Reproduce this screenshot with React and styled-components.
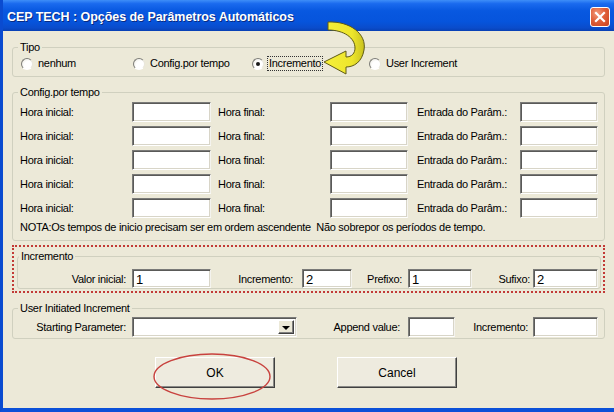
import React from 'react';
import styled, { createGlobalStyle } from 'styled-components';

const Global = createGlobalStyle`
  html, body { margin: 0; padding: 0; background: #ffffff; }
  body { font-family: "Liberation Sans", Arial, sans-serif; }
  * { box-sizing: border-box; }
`;

const Window = styled.div`
  position: relative;
  width: 614px;
  height: 412px;
  display: flex;
  flex-direction: column;
  background: #ECE9D8;
  border-left: 3px solid #0A4BD0;
  border-bottom: 4px solid #0B50D8;
  overflow: hidden;
`;

const TitleBar = styled.div`
  height: 31px;
  flex: none;
  display: flex;
  align-items: center;
  justify-content: space-between;
  padding: 3px 4px 0 4px;
  margin-left: -3px;
  padding-left: 7px;
  background: linear-gradient(to bottom, #3E8EF8 0%, #1A6AEE 12%, #0858E0 35%, #0654DC 70%, #0A4CCB 90%, #0840B4 100%);
`;

const Title = styled.div`
  color: #ffffff;
  font-weight: bold;
  font-size: 12.5px;
  letter-spacing: -0.05px;
  text-shadow: 1px 1px 0 #0A2A80;
  white-space: nowrap;
`;

const CloseButton = styled.div`
  width: 20px;
  height: 20px;
  border-radius: 3px;
  border: 1px solid #ffffff;
  background: radial-gradient(circle at 35% 30%, #F29A7C 0%, #E0603A 45%, #C8411E 100%);
  display: flex;
  align-items: center;
  justify-content: center;
`;

const Body = styled.div`
  flex: 1;
  display: flex;
  flex-direction: column;
  padding: 11px 9px 0 9px;
  font-size: 11px;
  letter-spacing: -0.3px;
  color: #000;
`;

const Group = styled.fieldset`
  margin: ${p => p.$mt || 0}px 0 0 0;
  padding: ${p => p.$pad};
  border: 1px solid #D0D0BF;
  border-radius: 3px;
  min-width: 0;
`;

const Legend = styled.legend`
  padding: 0 2px;
  margin-left: ${p => p.$ml || 0}px;
  font-size: 11px;
  line-height: 11px;
  letter-spacing: -0.3px;
`;

const RadioRow = styled.div`
  display: grid;
  grid-template-columns: 112px 119px 117px auto;
  height: 14px;
  align-items: center;
`;

const RadioItem = styled.label`
  display: flex;
  align-items: center;
  gap: 3px;
  white-space: nowrap;
`;

const RadioDot = styled.span`
  width: 12px;
  height: 12px;
  flex: none;
  border-radius: 50%;
  background: radial-gradient(circle at 65% 65%, #ffffff 0%, #ffffff 45%, #e8e6dc 100%);
  border: 1px solid;
  border-color: #7d7d78 #e8e6dc #ffffff #7d7d78;
  display: flex;
  align-items: center;
  justify-content: center;
  &::after {
    content: "";
    width: 4px;
    height: 4px;
    border-radius: 50%;
    background: ${p => (p.$checked ? '#1a1a1a' : 'transparent')};
  }
`;

const RadioText = styled.span`
  padding: 1px 1px;
  border: 1px dotted ${p => (p.$focus ? '#333' : 'transparent')};
  line-height: 11px;
`;

const TimeGrid = styled.div`
  display: grid;
  grid-template-columns: 112px 79px 119px 78px 112px 78px;
  grid-auto-rows: 20px;
  row-gap: 4px;
  align-items: center;
`;

const Label = styled.span`
  padding-left: ${p => p.$indent || 0}px;
  white-space: nowrap;
`;

const RightLabel = styled.span`
  width: ${p => p.$w}px;
  flex: none;
  text-align: right;
  padding-right: ${p => p.$pr || 0}px;
  white-space: nowrap;
`;

const Field = styled.input`
  width: ${p => (p.$w ? `${p.$w}px` : '100%')};
  height: ${p => p.$h || 20}px;
  flex: none;
  margin: 0;
  padding: 1px 3px 0 3px;
  background: #ffffff;
  border: 1px solid;
  border-color: #7a7a78 #f4f3ee #ffffff #7a7a78;
  box-shadow: inset 1px 1px 0 #5a5a58, inset -1px -1px 0 #d8d5c8;
  font-family: "Liberation Sans", Arial, sans-serif;
  font-size: 13px;
  color: #000;
  outline: none;
`;

const Note = styled.div`
  margin-top: 3px;
  line-height: 13px;
  white-space: nowrap;
`;

const Highlight = styled.div`
  margin-top: 4px;
  border: 2px dotted #C23A36;
  padding: 4px 2px 2px 3px;
`;

const FieldRow = styled.div`
  display: flex;
  align-items: center;
  height: ${p => p.$h || 20}px;
`;

const Combo = styled.div`
  width: ${p => p.$w}px;
  height: 20px;
  flex: none;
  background: #ffffff;
  border: 1px solid;
  border-color: #7a7a78 #f4f3ee #ffffff #7a7a78;
  box-shadow: inset 1px 1px 0 #5a5a58, inset -1px -1px 0 #d8d5c8;
  display: flex;
  justify-content: flex-end;
  padding: 2px;
`;

const ComboButton = styled.div`
  width: 16px;
  height: 100%;
  background: #ECE9D8;
  border: 1px solid;
  border-color: #ffffff #404040 #404040 #ffffff;
  box-shadow: inset -1px -1px 0 #808080;
  display: flex;
  align-items: center;
  justify-content: center;
  &::after {
    content: "";
    border-left: 4px solid transparent;
    border-right: 4px solid transparent;
    border-top: 4px solid #000;
    margin-top: 1px;
  }
`;

const ButtonRow = styled.div`
  margin-top: 18px;
  display: flex;
  gap: 62px;
  padding-left: 143px;
`;

const ButtonWrap = styled.div`
  position: relative;
`;

const Button = styled.button`
  width: 120px;
  height: 31px;
  margin: 0;
  padding: 0;
  background: #EEEBDF;
  border: 1px solid;
  border-color: #ffffff #404040 #404040 #ffffff;
  box-shadow: inset -1px -1px 0 #8a8a86;
  font-family: "Liberation Sans", Arial, sans-serif;
  font-size: 12px;
  color: #000;
`;

const Ellipse = styled.svg`
  position: absolute;
  left: -2px;
  top: -4px;
  pointer-events: none;
  overflow: visible;
`;

const Arrow = styled.svg`
  position: absolute;
  left: 315px;
  top: 18px;
  pointer-events: none;
`;

export default function App() {
  const rows = [0, 1, 2, 3, 4];
  return (
    <>
      <Global />
      <Window>
        <TitleBar>
          <Title>CEP TECH : Opções de Parâmetros Automáticos</Title>
          <CloseButton>
            <svg width="12" height="12" viewBox="0 0 12 12">
              <path d="M2 2 L10 10 M10 2 L2 10" stroke="#ffffff" strokeWidth="2.2" strokeLinecap="square" />
            </svg>
          </CloseButton>
        </TitleBar>
        <Body>
          <Group $pad="3px 8px 6px 8px">
            <Legend $ml={-3}>Tipo</Legend>
            <RadioRow>
              <RadioItem><RadioDot /><RadioText>nenhum</RadioText></RadioItem>
              <RadioItem><RadioDot /><RadioText>Config.por tempo</RadioText></RadioItem>
              <RadioItem><RadioDot $checked /><RadioText $focus>Incremento</RadioText></RadioItem>
              <RadioItem><RadioDot /><RadioText>User Increment</RadioText></RadioItem>
            </RadioRow>
          </Group>

          <Group $mt={10} $pad="4px 5px 6px 7px">
            <Legend $ml={-2}>Config.por tempo</Legend>
            <TimeGrid>
              {rows.map(i => (
                <React.Fragment key={i}>
                  <Label>Hora inicial:</Label>
                  <Field readOnly />
                  <Label $indent={7}>Hora final:</Label>
                  <Field readOnly />
                  <Label $indent={9}>Entrada do Parâm.:</Label>
                  <Field readOnly />
                </React.Fragment>
              ))}
            </TimeGrid>
            <Note>NOTA:Os tempos de inicio precisam ser em ordem ascendente&nbsp; Não sobrepor os períodos de tempo.</Note>
          </Group>

          <Highlight>
            <Group $pad="7px 0 0 0">
              <Legend $ml={1}>Incremento</Legend>
              <FieldRow $h={19}>
                <RightLabel $w={114} $pr={6}>Valor inicial:</RightLabel>
                <Field readOnly $w={79} $h={19} value="1" />
                <RightLabel $w={91} $pr={9}>Incremento:</RightLabel>
                <Field readOnly $w={50} $h={19} value="2" />
                <RightLabel $w={56} $pr={6}>Prefixo:</RightLabel>
                <Field readOnly $w={64} $h={19} value="1" />
                <RightLabel $w={61} $pr={3}>Sufixo:</RightLabel>
                <Field readOnly $w={65} $h={19} value="2" />
              </FieldRow>
            </Group>
          </Highlight>

          <Group $mt={10} $pad="3px 0 1px 0">
            <Legend $ml={5}>User Initiated Increment</Legend>
            <FieldRow>
              <RightLabel $w={119} $pr={6}>Starting Parameter:</RightLabel>
              <Combo $w={165}><ComboButton /></Combo>
              <RightLabel $w={111} $pr={8}>Append value:</RightLabel>
              <Field readOnly $w={47} />
              <RightLabel $w={78} $pr={5}>Incremento:</RightLabel>
              <Field readOnly $w={65} />
            </FieldRow>
          </Group>

          <ButtonRow>
            <ButtonWrap>
              <Button>OK</Button>
              <Ellipse width="118" height="47" viewBox="0 0 118 47">
                <ellipse cx="59" cy="23.5" rx="58" ry="22.5" fill="none" stroke="#C8423E" strokeWidth="1.4" />
              </Ellipse>
            </ButtonWrap>
            <ButtonWrap>
              <Button>Cancel</Button>
            </ButtonWrap>
          </ButtonRow>
        </Body>

        <Arrow width="55" height="60" viewBox="318 18 55 60">
          <defs>
            <linearGradient id="arrowFill" x1="0" y1="0" x2="1" y2="0">
              <stop offset="0" stopColor="#F6F03A" />
              <stop offset="0.7" stopColor="#EDE52C" />
              <stop offset="1" stopColor="#C9C21E" />
            </linearGradient>
          </defs>
          <path
            d="M328 22 C350 21, 367 34, 364 50 C362 62, 354 67, 346 67 L346 74 L324 62 L346 51 L346 57 C352 57, 355 53, 355 48 C355 38, 344 30, 328 30 Z"
            fill="url(#arrowFill)"
            stroke="#5E5A14"
            strokeWidth="1"
            strokeLinejoin="round"
          />
        </Arrow>
      </Window>
    </>
  );
}
